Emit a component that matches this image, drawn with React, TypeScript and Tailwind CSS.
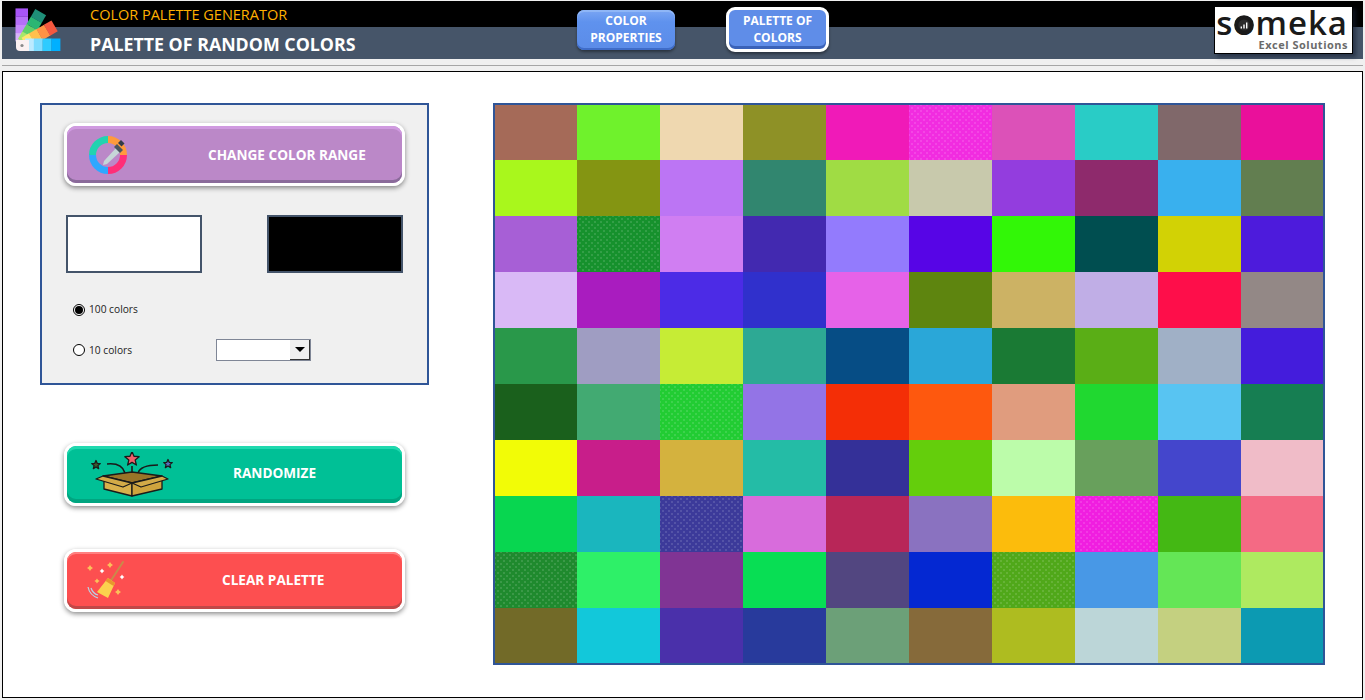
import type { ReactNode } from 'react';

const font = 'font-["Open_Sans","Liberation_Sans",sans-serif]';

// dotted: the cells Excel renders with a dither pattern
const dotted = ['0-5', '2-1', '5-2', '7-2', '7-7', '8-0', '8-6'];

const swatches = [
  ['#a56a58', '#6ff22c', '#efd8b0', '#8e9126', '#f01ab8', '#f12ce0', '#dc51b8', '#29ccc6', '#80686a', '#ea109b'],
  ['#a9f71c', '#849512', '#bc75f4', '#31866f', '#a0dc44', '#c8c9ac', '#933dde', '#8e2a6c', '#39b0ee', '#627e50'],
  ['#a75fd6', '#16912d', '#d07ef2', '#4229b0', '#937bfd', '#5705e6', '#32f707', '#004e50', '#d2d205', '#4d1bdc'],
  ['#d9b9f6', '#a91cbf', '#4c2be6', '#3030cc', '#e662e8', '#5e850f', '#ccb264', '#c0aee6', '#fe0e4a', '#938886'],
  ['#29984a', '#9f9dc2', '#c6ec35', '#2da994', '#064d85', '#2aa7d8', '#1a7a34', '#5aae16', '#a0b0c6', '#441cdc'],
  ['#1a601c', '#42aa72', '#22cc33', '#9374e6', '#f42e06', '#fe580e', '#e09c7e', '#20d830', '#58c4f2', '#167e52'],
  ['#f2fc06', '#c81e8a', '#d4b23e', '#24bca6', '#343098', '#64ce0c', '#bcfcaa', '#68a05c', '#4446cc', '#f0bcc8'],
  ['#08d650', '#1ab6be', '#3c3a9a', '#d86cdc', '#b82658', '#8a72c0', '#fcbc0c', '#f01ee0', '#44b814', '#f46a84'],
  ['#1f8a2e', '#2ef068', '#803494', '#08de54', '#524680', '#0428d2', '#50a81a', '#4898e6', '#64e656', '#aeea60'],
  ['#726a28', '#12c8da', '#4a30aa', '#283a9c', '#6ca078', '#866a3a', '#aebc20', '#bcd6d8', '#c4d080', '#0c9ab2'],
];

const FanIcon = () => {
  const strips = [
    { a: 0, step: 8.2, cols: ['#d9b3fb', '#c58af9', '#b56ff7', '#a855f7'] },
    { a: 30, step: 8.6, cols: ['#a6e86a', '#5fd068', '#2bb673', '#1f8f78'] },
    { a: 60, step: 8.6, cols: ['#ffe66d', '#ffc04d', '#ff9244', '#f4583f'] },
    { a: 90, step: 8.8, cols: ['#bdeaff', '#7fdcff', '#2fcbff', '#00b0ff'] },
  ];
  return (
    <svg width="48" height="46" viewBox="0 0 48 46">
      {strips.map((s) => (
        <g key={s.a} transform={`rotate(${s.a} 7 38)`}>
          {s.cols.map((c, i) => (
            <rect key={c} x="0.5" y={26 - i * s.step} width="12.5" height={s.step + 0.2} fill={c} />
          ))}
        </g>
      ))}
      <path d="M1 33h13v11H5a4 4 0 0 1-4-4z" fill="#fbf1f1" />
      <circle cx="7" cy="38.5" r="1.6" fill="#8a8a8a" />
    </svg>
  );
};

const SomekaLogo = () => (
  <div className="relative flex h-[48px] w-[139px] flex-col items-end border border-black bg-white pr-[4px] shadow-[3px_3px_4px_rgba(20,30,50,0.6)]">
    <div className='flex h-[31px] items-center font-["Open_Sans",sans-serif] text-[33px] tracking-[1px] text-[#1a1a1a]'>
      <span className="inline-block h-[31px] font-semibold leading-[31px]">s</span>
      <span className="inline-block h-[31px] font-extrabold leading-[31px]">o</span>
      <span className="inline-block h-[31px] font-semibold leading-[31px]">meka</span>
    </div>
    {/* the logo's round mark, with bars, sits on the o */}
    <svg className="absolute left-[19px] top-[8px]" width="20" height="20" viewBox="0 0 20 20">
      <circle cx="10" cy="10" r="9.8" fill="#1a1a1a" />
      <circle cx="10" cy="10" r="5.6" fill="#2c2c2c" />
      <path d="M6.6 11.4h1.4v2H6.6zM9.3 9.4h1.4v4H9.3zM12 7.4h1.4v6H12z" fill="#fff" />
    </svg>
    <div className={`${font} mt-[1px] text-[11px] font-bold leading-[12px] tracking-[0.5px] text-[#6b6b6b]`}>Excel Solutions</div>
  </div>
);

const WheelIcon = () => (
  <svg width="44" height="44" viewBox="0 1 44 44">
    <g fill="none" strokeWidth="7">
      <path d="M3.5 23A15.5 15.5 0 0 1 19 7.5" stroke="#22d3b0" />
      <path d="M19 7.5A15.5 15.5 0 0 1 34.5 23" stroke="#ff9a3c" />
      <path d="M34.5 23A15.5 15.5 0 0 1 19 38.5" stroke="#ff2e78" />
      <path d="M19 38.5A15.5 15.5 0 0 1 3.5 23" stroke="#2ea8ff" />
    </g>
    <path d="M15 29l12-13 4 4-13 12-4 1z" fill="#c6d6d8" />
    <path d="M25 15l6 6 3-3-6-6z" fill="#4a5560" />
    <path d="M29 11l3-3 3.5 3.5-3 3z" fill="#323c48" />
  </svg>
);

const Star = ({ x, y, r, fill }: { x: number; y: number; r: number; fill: string }) => {
  const pts = Array.from({ length: 10 }, (_, i) => {
    const rad = i % 2 === 0 ? r : r * 0.45;
    const ang = (Math.PI / 5) * i - Math.PI / 2;
    return `${x + rad * Math.cos(ang)},${y + rad * Math.sin(ang)}`;
  }).join(' ');
  return <polygon points={pts} fill={fill} />;
};

const BoxIcon = () => (
  <svg width="88" height="46" viewBox="0 0 88 46">
    <g stroke="#1a1a1a" strokeWidth="1.3" strokeLinejoin="round">
      <Star x={47} y={7} r={7.5} fill="#f0606a" />
      <Star x={11} y={13} r={4.5} fill="#3a5a30" />
      <Star x={83} y={12} r={4.5} fill="#5a70c0" />
      <path d="M47 14v7M22 12c10-1 16 2 18 9M73 13c-10 0-18 2-20 8" fill="none" strokeWidth="1.6" />
      <path d="M47 20L18 24l29 7 30-7z" fill="#9a7428" />
      <path d="M19 27l28 4v13l-28-7z" fill="#d8b04c" />
      <path d="M47 31l30-4v10l-30 7z" fill="#cfa43e" />
      <path d="M18 24l-7 3 27 8 9-4z" fill="#d2aa48" />
      <path d="M77 24l6 3-27 8-9-4z" fill="#d2aa48" />
    </g>
  </svg>
);

const Spark = ({ x, y, r, fill }: { x: number; y: number; r: number; fill: string }) => (
  <path d={`M${x} ${y - r}L${x + r * 0.4} ${y - r * 0.4}L${x + r} ${y}L${x + r * 0.4} ${y + r * 0.4}L${x} ${y + r}L${x - r * 0.4} ${y + r * 0.4}L${x - r} ${y}L${x - r * 0.4} ${y - r * 0.4}Z`} fill={fill} />
);

const BroomIcon = () => (
  <svg width="42" height="42" viewBox="0 0 42 42">
    <path d="M39 2L26 22" stroke="#c98a4a" strokeWidth="2" strokeLinecap="round" />
    <path d="M24 18l7 5-7 15-11-6z" fill="#fbd24e" />
    <path d="M24 18l7 5-1.5 3-8-5z" fill="#e8962e" />
    <path d="M4 27c1 5 4 9 10 11M7 28c1 3 3 6 7 7" stroke="#b8d4e6" strokeWidth="1.2" fill="none" />
    <Spark x={6} y={8} r={3} fill="#fbc05a" />
    <Spark x={26} y={5} r={3} fill="#fbc05a" />
    <Spark x={13} y={21} r={2.6} fill="#fbc05a" />
    <Spark x={34} y={32} r={3} fill="#fbc05a" />
    <Spark x={18} y={11} r={2.4} fill="#fff" />
    <Spark x={38} y={17} r={2.4} fill="#fff" />
  </svg>
);

interface ActionProps {
  icon: ReactNode;
  label: string;
  face: string;
  iconBox: string;
  textBox: string;
}

const ActionButton = ({ icon, label, face, iconBox, textBox }: ActionProps) => (
  <div className="h-[63px] w-[341px] rounded-[12px] border-[3px] border-white shadow-[0_2px_5px_rgba(0,0,0,0.45)]">
    <div className={`flex h-full w-full items-center rounded-[9px] ${face}`}>
      <div className={iconBox}>{icon}</div>
      <div className={`${font} text-[13.6px] font-bold text-white ${textBox}`}>{label}</div>
    </div>
  </div>
);

const NavButton = ({ children, active }: { children: ReactNode; active?: boolean }) => (
  <div
    className={
      active
        ? `${font} mb-[1px] flex h-[45px] w-[103px] items-center justify-center rounded-[9px] border-[3px] border-white bg-[#5f8de8] pb-[2px] text-center text-[12px] font-bold leading-[17px] text-white shadow-[inset_0_-3px_0_#3a62b8,0_2px_3px_rgba(0,0,0,0.4)]`
        : `${font} flex h-[40px] w-[98px] items-center justify-center rounded-[7px] bg-[linear-gradient(#7ba6f4,#5f92ee_30%,#5b8ce8)] pb-[2px] text-center text-[12px] font-bold leading-[17px] text-white shadow-[inset_0_2px_0_#8fb6f6,inset_0_-2px_0_#3f6cc8,0_2px_3px_rgba(0,0,0,0.4)]`
    }
  >
    <span>{children}</span>
  </div>
);

const Radio = ({ on, label }: { on?: boolean; label: string }) => (
  <div className="flex items-center gap-[4px]">
    <div className="flex h-[12px] w-[12px] items-center justify-center rounded-full border border-black bg-white">
      {on && <div className="h-[8px] w-[8px] rounded-full bg-black" />}
    </div>
    <span className={`${font} text-[10.2px] text-[#222]`}>{label}</span>
  </div>
);

export default function App() {
  return (
    <div className="flex h-[700px] w-[1365px] flex-col overflow-hidden bg-[#f0f0f0] px-[2px] pt-[1px]">
      {/* Title bar */}
      <header className="flex h-[58px] shrink-0 items-center bg-[linear-gradient(#000_0_26px,#465569_26px)]">
        <div className="ml-[13px] w-[75px] shrink-0">
          <FanIcon />
        </div>
        <div className={`${font} flex h-full w-[487px] shrink-0 flex-col`}>
          <div className="flex h-[26px] items-center pt-[1px] text-[14.5px] text-[#ffb000]">COLOR PALETTE GENERATOR</div>
          <div className="flex h-[32px] items-center pt-[3px] text-[17.8px] font-bold text-white">PALETTE OF RANDOM COLORS</div>
        </div>
        <NavButton>
          COLOR
          <br />
          PROPERTIES
        </NavButton>
        <div className="ml-[51px]">
          <NavButton active>
            PALETTE OF
            <br />
            COLORS
          </NavButton>
        </div>
        <div className="ml-[385px]">
          <SomekaLogo />
        </div>
      </header>

      <div className="mt-[6px] h-px shrink-0 bg-[#a6a6a6]" />

      {/* Sheet */}
      <main className="mt-[5px] flex h-[627px] shrink-0 border border-black bg-white pl-[37px] pt-[31px]">
        <div className="w-[389px] shrink-0">
          <section className="h-[282px] border-2 border-[#2f5597] bg-[#f0f0f0] pl-[22px] pt-[18px]">
            <ActionButton
              icon={<WheelIcon />}
              label="CHANGE COLOR RANGE"
              face="bg-[#bb88c8] shadow-[inset_0_3px_0_#d09ae0,inset_0_-3px_0_#8a6a9a]"
              iconBox="ml-[22px] w-[119px]"
              textBox="pt-[1px]"
            />
            <div className="mt-[29px] flex gap-[65px] pl-[2px]">
              <div className="h-[58px] w-[136px] border-2 border-[#44546a] bg-white" />
              <div className="h-[58px] w-[136px] border-2 border-[#44546a] bg-black" />
            </div>
            <div className="mt-[29px] pl-[9px]">
              <Radio on label="100 colors" />
            </div>
            <div className="mt-[22px] flex items-center pl-[9px]">
              <div className="w-[143px]">
                <Radio label="10 colors" />
              </div>
              <div className="flex h-[22px] w-[95px] justify-end border border-[#7f8696] bg-white">
                <div className="flex w-[20px] items-center justify-center border-b border-r border-b-[#333] border-r-[#333] bg-[#f0f0f0]">
                  <div className="h-0 w-0 border-x-[5px] border-t-[5px] border-x-transparent border-t-black" />
                </div>
              </div>
            </div>
          </section>

          <div className="mt-[58px] pl-[24px]">
            <ActionButton
              icon={<BoxIcon />}
              label="RANDOMIZE"
              face="bg-[#00c096] shadow-[inset_0_3px_0_#1fd8ae,inset_0_-4px_0_#00a580]"
              iconBox="ml-[18px] w-[148px]"
              textBox="pb-[2px]"
            />
          </div>
          <div className="mt-[43px] pl-[24px]">
            <ActionButton
              icon={<BroomIcon />}
              label="CLEAR PALETTE"
              face="bg-[#fd4f50] shadow-[inset_0_2px_0_#ff8080,inset_0_-3px_0_#c04848]"
              iconBox="ml-[17px] w-[138px]"
              textBox=""
            />
          </div>
        </div>

        {/* Palette */}
        <div className="ml-[64px] grid h-[562px] w-[832px] shrink-0 grid-cols-[82px_repeat(8,83px)_82px] grid-rows-[55px_repeat(8,56px)_55px] border-2 border-[#2f5597]">
          {swatches.map((row, r) =>
            row.map((c, i) => (
              <div
                key={`${r}-${i}`}
                style={{ backgroundColor: c }}
                className={
                  dotted.includes(`${r}-${i}`)
                    ? 'bg-[radial-gradient(rgba(255,255,255,0.13)_0.7px,transparent_1px),radial-gradient(rgba(255,255,255,0.13)_0.7px,transparent_1px)] bg-[length:6px_6px] bg-[position:0_0,3px_3px]'
                    : ''
                }
              />
            )),
          )}
        </div>
      </main>
    </div>
  );
}
